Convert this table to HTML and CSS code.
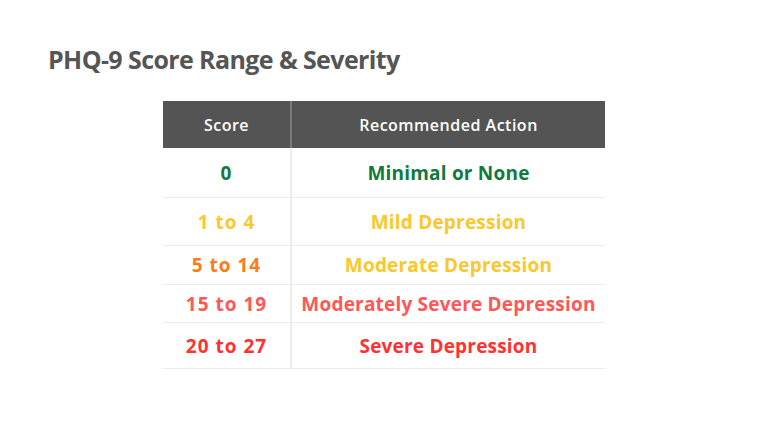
FILE: index.html
```html
<!DOCTYPE html>
<html lang="en">
<head>
    <meta charset="UTF-8">
    <meta name="viewport" content="width=device-width, initial-scale=1.0">
    <title>PHQ-9 Score Range &amp; Severity</title>
    <link rel="stylesheet" href="styles.css">
</head>
<body>
    <div class="slide">
        <h1>PHQ-9 Score Range &amp; Severity</h1>

        <table class="phq-table">
            <thead>
                <tr>
                    <th class="col-score">Score</th>
                    <th>Recommended Action</th>
                </tr>
            </thead>
            <tbody>
                <tr class="row-1">
                    <td class="green">0</td>
                    <td class="green">Minimal or None</td>
                </tr>
                <tr class="row-2">
                    <td class="yellow">1 to 4</td>
                    <td class="yellow">Mild Depression</td>
                </tr>
                <tr class="row-3">
                    <td class="orange">5 to 14</td>
                    <td class="yellow">Moderate Depression</td>
                </tr>
                <tr class="row-4">
                    <td class="salmon">15 to 19</td>
                    <td class="salmon">Moderately Severe Depression</td>
                </tr>
                <tr class="row-5">
                    <td class="red">20 to 27</td>
                    <td class="red">Severe Depression</td>
                </tr>
            </tbody>
        </table>
    </div>
</body>
</html>
```

FILE: styles.css
```css
body {
    margin: 0;
    background: #ffffff;
    font-family: 'Open Sans', 'Noto Sans', sans-serif;
}

.slide {
    width: 768px;
    height: 432px;
    padding: 40px 0 0 48px;
    box-sizing: border-box;
}

h1 {
    margin: 0 0 23px 0;
    font-size: 25px;
    font-weight: 700;
    color: #555555;
    line-height: 38px;
    letter-spacing: -0.6px;
}

.phq-table {
    margin-left: 115px;
    width: 442px;
    border-collapse: collapse;
    text-align: center;
}

.phq-table th {
    background: #545454;
    color: #ffffff;
    font-size: 16px;
    font-weight: 600;
    letter-spacing: 0.5px;
    height: 47px;
    padding: 0;
}

.phq-table th.col-score {
    width: 127px;
    border-right: 2px solid #7a7a7a;
}

.phq-table td {
    font-size: 19px;
    font-weight: 700;
    letter-spacing: 0.2px;
    padding: 0;
    border-bottom: 1px solid #ececec;
}

.phq-table td:first-child {
    letter-spacing: 1px;
    border-right: 2px solid #ececec;
}

.row-1 td { height: 49px; }
.row-2 td { height: 47px; }
.row-3 td { height: 38px; }
.row-4 td { height: 37px; }
.row-5 td { height: 45px; }

.green  { color: #107a3c; }
.yellow { color: #fcc72c; }
.orange { color: #ff7b16; }
.salmon { color: #ff5757; }
.red    { color: #ff3131; }
```
